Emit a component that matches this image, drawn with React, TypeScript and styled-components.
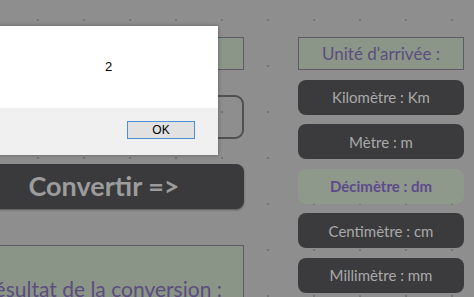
import styled, { createGlobalStyle } from 'styled-components';

const Global = createGlobalStyle`
    html, body {
        margin: 0;
        padding: 0;
        width: 474px;
        height: 297px;
        overflow: hidden;
        background-color: #8e8e8e;
    }
`;

const Page = styled.div`
    position: relative;
    width: 474px;
    height: 297px;
    overflow: hidden;
    background-color: #8e8e8e;
    background-image: radial-gradient(circle, rgba(70, 70, 70, 0.35) 1px, transparent 1.5px);
    background-size: 46px 46px;
    background-position: 15px -3px;
    display: flex;
    gap: 54px;
    font-family: Lato, "Open Sans", sans-serif;
`;

const LeftColumn = styled.div`
    width: 264px;
    margin-left: -20px;
    padding-top: 37px;
    display: flex;
    flex-direction: column;
    flex-shrink: 0;
    & > * {
        flex-shrink: 0;
    }
`;

const LabelBox = styled.div`
    height: 33px;
    box-sizing: border-box;
    background-color: #8b9689;
    border: 1px solid #5c5b66;
    display: flex;
    align-items: center;
    justify-content: center;
    color: #5b4d7d;
    font-size: 17px;
`;

const InputBox = styled.div`
    margin-top: 25px;
    height: 44px;
    box-sizing: border-box;
    border: 2px solid #505052;
    border-radius: 9px;
`;

const ConvertButton = styled.button`
    margin-top: 25px;
    height: 45px;
    border: none;
    border-radius: 8px;
    background-color: #3a3a3c;
    box-shadow: 0 1px 2px rgba(0, 0, 0, 0.4);
    color: #9c9c9c;
    font-family: Lato, "Open Sans", sans-serif;
    font-weight: 700;
    font-size: 27px;
    display: flex;
    align-items: center;
    justify-content: center;
    padding: 0 16px 3px 0;
`;

const ResultBox = styled.div`
    margin-top: 36px;
    height: 60px;
    box-sizing: border-box;
    background-color: #8a9588;
    border: 1px solid #5c5b66;
    display: flex;
    align-items: flex-start;
    justify-content: flex-end;
    padding: 31px 21px 0 0;
    color: #5b4d7d;
    font-size: 21px;
    line-height: 24px;
    white-space: nowrap;
`;

const RightColumn = styled.div`
    width: 166px;
    padding-top: 37px;
    display: flex;
    flex-direction: column;
    gap: 9.5px;
    & > * {
        flex-shrink: 0;
    }
`;

const UnitButton = styled.button<{ $active?: boolean }>`
    height: 35px;
    border: none;
    border-radius: 8px;
    background-color: ${p => (p.$active ? '#8e998c' : '#3b3b3d')};
    color: ${p => (p.$active ? '#5e4a8a' : '#a9a9a9')};
    font-family: Lato, "Open Sans", sans-serif;
    font-weight: ${p => (p.$active ? 700 : 400)};
    font-size: 15px;
    display: flex;
    align-items: center;
    justify-content: center;
    padding: 0;
`;

const Dialog = styled.div`
    position: absolute;
    left: -120px;
    top: 26px;
    width: 338px;
    height: 129px;
    background-color: #f0f0f0;
    box-shadow: 0 0 4px rgba(0, 0, 0, 0.35);
    display: flex;
    flex-direction: column;
    font-family: "Liberation Sans", Arial, sans-serif;
    font-size: 13px;
    color: #000;
`;

const DialogBody = styled.div`
    height: 82px;
    background-color: #ffffff;
    display: flex;
    align-items: center;
    padding-left: 225px;
    padding-bottom: 2px;
    box-sizing: border-box;
`;

const DialogFooter = styled.div`
    flex: 1;
    display: flex;
    justify-content: flex-end;
    padding: 13px 23px 0 0;
`;

const OkButton = styled.button`
    width: 68px;
    height: 18px;
    box-sizing: border-box;
    border: 1px solid #4a90d6;
    background-color: #e1e1e1;
    font-family: "Liberation Sans", Arial, sans-serif;
    font-size: 12px;
    color: #000;
    padding: 0;
`;

const units = [
    'Kilomètre : Km',
    'Mètre : m',
    'Décimètre : dm',
    'Centimètre : cm',
    'Millimètre : mm',
];

export default function App() {
    return (
        <Page>
            <Global />
            <LeftColumn>
                <LabelBox />
                <InputBox />
                <ConvertButton>Convertir =&gt;</ConvertButton>
                <ResultBox>Résultat de la conversion :</ResultBox>
            </LeftColumn>
            <RightColumn>
                <LabelBox>Unité d'arrivée :</LabelBox>
                {units.map(u => (
                    <UnitButton key={u} $active={u.startsWith('Déci')}>{u}</UnitButton>
                ))}
            </RightColumn>
            <Dialog>
                <DialogBody>2</DialogBody>
                <DialogFooter>
                    <OkButton>OK</OkButton>
                </DialogFooter>
            </Dialog>
        </Page>
    );
}
